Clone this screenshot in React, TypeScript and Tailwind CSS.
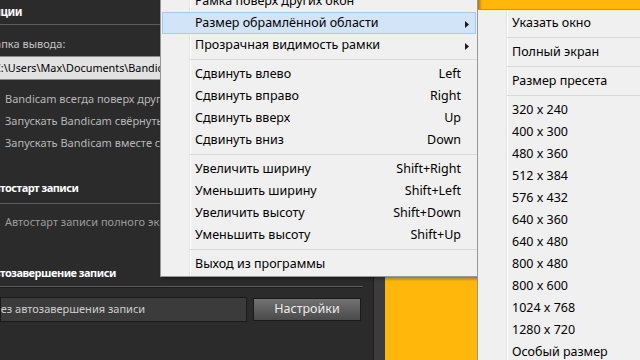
import React from "react";

const Arrow = () => (
  <svg width="4" height="7" viewBox="0 0 4 7" className="absolute right-[6px] top-[8px]">
    <path d="M0 0 L4 3.5 L0 7 Z" fill="#1a1a1a" />
  </svg>
);

type Item = { t: string; k?: string; arrow?: boolean; hi?: boolean } | "sep";

const mainItems: Item[] = [
  { t: "Рамка поверх других окон" },
  { t: "Размер обрамлённой области", arrow: true, hi: true },
  { t: "Прозрачная видимость рамки", arrow: true },
  "sep",
  { t: "Сдвинуть влево", k: "Left" },
  { t: "Сдвинуть вправо", k: "Right" },
  { t: "Сдвинуть вверх", k: "Up" },
  { t: "Сдвинуть вниз", k: "Down" },
  "sep",
  { t: "Увеличить ширину", k: "Shift+Right" },
  { t: "Уменьшить ширину", k: "Shift+Left" },
  { t: "Увеличить высоту", k: "Shift+Down" },
  { t: "Уменьшить высоту", k: "Shift+Up" },
  "sep",
  { t: "Выход из программы" },
];

const subItems: Item[] = [
  { t: "Указать окно" },
  "sep",
  { t: "Полный экран" },
  "sep",
  { t: "Размер пресета" },
  "sep",
  { t: "320 x 240" },
  { t: "400 x 300" },
  { t: "480 x 360" },
  { t: "512 x 384" },
  { t: "576 x 432" },
  { t: "640 x 360" },
  { t: "640 x 480" },
  { t: "800 x 480" },
  { t: "800 x 600" },
  { t: "1024 x 768" },
  { t: "1280 x 720" },
  { t: "Особый размер" },
];

function MenuList({ items }: { items: Item[] }) {
  return (
    <>
      {items.map((it, i) =>
        it === "sep" ? (
          <div key={i} className="h-[7px] flex items-center pl-[29px] relative">
            <div className="w-full h-px bg-[#d9d9d9]" />
          </div>
        ) : (
          <div
            key={i}
            className={
              "relative h-[22px] mx-px flex items-center pl-[32px] pr-[14px] border " +
              (it.hi ? "bg-[#d1e4f8] border-[#a7c9ee]" : "border-transparent")
            }
          >
            <span className="whitespace-nowrap">{it.t}</span>
            {it.k && <span className="ml-auto whitespace-nowrap">{it.k}</span>}
            {it.arrow && <Arrow />}
          </div>
        )
      )}
    </>
  );
}

export default function App() {
  return (
    <div className="relative w-[640px] h-[360px] overflow-hidden flex font-['Noto_Sans',sans-serif]">
      {/* Bandicam dark panel */}
      <div className="w-[373px] h-full bg-[#2b2b2b] flex flex-col overflow-hidden text-[11px]">
        <div className="h-[24px] flex items-center font-bold text-white text-[11.5px] tracking-[-0.5px] ml-[-15px] whitespace-nowrap">Опции</div>
        <div className="w-[363px] h-px bg-[#5c5c5c]" />
        <div className="h-[8px]" />
        <div className="h-[22px] flex items-center text-[#c4c4c4] ml-[-13px] whitespace-nowrap">Папка вывода:</div>
        <div className="h-px" />
        <div className="h-[24px] w-[200px] bg-[#e2e2e2] border-y border-[#8a8a8a] flex items-center text-black text-[10.8px] whitespace-nowrap overflow-hidden">
          <span className="ml-[-6px]">C:\Users\Max\Documents\Bandicam</span>
        </div>
        <div className="h-[8px]" />
        {["Bandicam всегда поверх других окон", "Запускать Bandicam свёрнутым в трей", "Запускать Bandicam вместе с Windows"].map((t) => (
          <div key={t} className="h-[22px] flex items-center pl-[5px] text-[#b8b8b8] whitespace-nowrap">{t}</div>
        ))}
        <div className="h-[23px]" />
        <div className="h-[22px] flex items-center font-bold text-white text-[11px] tracking-[-0.5px] ml-[-13px] whitespace-nowrap">Автостарт записи</div>
        <div className="h-[4px]" />
        <div className="w-[363px] h-px bg-[#5c5c5c]" />
        <div className="h-[7px]" />
        <div className="h-[22px] flex items-center pl-[5px] text-[#9c9c9c] whitespace-nowrap">Автостарт записи полного экрана</div>
        <div className="h-[29px]" />
        <div className="h-[22px] flex items-center font-bold text-white text-[11px] tracking-[-0.5px] ml-[-13px] whitespace-nowrap">Автозавершение записи</div>
        <div className="h-[2px]" />
        <div className="w-[363px] h-px bg-[#5c5c5c]" />
        <div className="w-[363px] h-px bg-[#1c1c1c]" />
        <div className="h-[9px]" />
        <div className="flex items-center h-[25px]">
          <div className="w-[247px] h-[25px] bg-[#3b3b3b] border border-[#1a1a1a] flex items-center text-[#cfcfcf] whitespace-nowrap overflow-hidden">
            <span className="ml-[-7px]">Без автозавершения записи</span>
          </div>
          <div className="ml-[6px] w-[108px] h-[23px] border border-[#1a1a1a] bg-gradient-to-b from-[#727272] to-[#4a4a4a] flex items-center justify-center text-[#ececec] text-[12.5px]">
            Настройки
          </div>
        </div>
      </div>
      <div className="w-[12px] h-full bg-[#3c3c3c] border-l border-[#1e1e1e]" />
      <div className="flex-1 h-full bg-[#ffb70c]" />

      {/* Main context menu */}
      <div className="absolute left-[160px] top-[-12px] w-[318px] bg-[#f0f0f0] border border-[#979797] py-px text-[12.5px] text-black shadow-[2px_2px_3px_rgba(0,0,0,0.35)]">
        <div className="absolute left-[28px] top-0 bottom-0 w-px bg-[#e2e3e3]" />
        <div className="absolute left-[29px] top-0 bottom-0 w-px bg-white" />
        <MenuList items={mainItems} />
      </div>

      {/* Sub menu */}
      <div className="absolute left-[477px] top-[9px] w-[175px] h-[370px] bg-[#f0f0f0] border border-[#979797] pt-[2px] text-[12.5px] text-black">
        <div className="absolute left-[28px] top-0 bottom-0 w-px bg-[#e2e3e3]" />
        <div className="absolute left-[29px] top-0 bottom-0 w-px bg-white" />
        <MenuList items={subItems} />
      </div>
    </div>
  );
}
